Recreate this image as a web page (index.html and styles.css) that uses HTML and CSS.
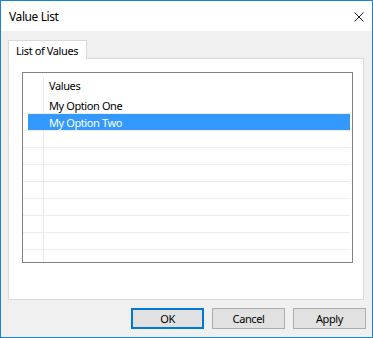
FILE: index.html
```html
<!DOCTYPE html>
<html lang="en">
<head>
    <meta charset="UTF-8">
    <title>Value List</title>
    <link rel="stylesheet" href="styles.css">
</head>
<body>
    <div class="window">
        <div class="title-bar">
            <span class="title">Value List</span>
            <svg class="close" width="10" height="10" viewBox="0 0 10 10">
                <path d="M0.5 0.5 L9.5 9.5 M9.5 0.5 L0.5 9.5" stroke="#1a1a1a" stroke-width="1" fill="none"/>
            </svg>
        </div>

        <div class="content">
            <div class="tabs">
                <div class="tab active">List of Values</div>
            </div>
            <div class="tab-panel">
                <div class="grid">
                    <div class="row header">
                        <div class="row-head"></div>
                        <div class="cell">Values</div>
                    </div>
                    <div class="row">
                        <div class="row-head"></div>
                        <div class="cell">My Option One</div>
                    </div>
                    <div class="row selected">
                        <div class="row-head"></div>
                        <div class="cell">My Option Two</div>
                    </div>
                    <div class="row"><div class="row-head"></div><div class="cell"></div></div>
                    <div class="row"><div class="row-head"></div><div class="cell"></div></div>
                    <div class="row"><div class="row-head"></div><div class="cell"></div></div>
                    <div class="row"><div class="row-head"></div><div class="cell"></div></div>
                    <div class="row"><div class="row-head"></div><div class="cell"></div></div>
                    <div class="row"><div class="row-head"></div><div class="cell"></div></div>
                    <div class="row"><div class="row-head"></div><div class="cell"></div></div>
                    <div class="row"><div class="row-head"></div><div class="cell"></div></div>
                </div>
            </div>

            <div class="buttons">
                <button class="btn default">OK</button>
                <button class="btn">Cancel</button>
                <button class="btn">Apply</button>
            </div>
        </div>
    </div>
</body>
</html>
```

FILE: styles.css
```css
* {
    margin: 0;
    padding: 0;
    box-sizing: border-box;
    font-family: 'Noto Sans', 'Segoe UI', sans-serif;
    letter-spacing: -0.4px;
}

body {
    background-color: #f0f0f0;
    width: 373px;
    height: 338px;
    overflow: hidden;
}

.window {
    width: 373px;
    height: 338px;
    border: 1px solid #1883d7;
    background-color: #f0f0f0;
    display: flex;
    flex-direction: column;
}

.title-bar {
    height: 30px;
    background-color: #fff;
    display: flex;
    align-items: center;
    justify-content: space-between;
    padding: 0 8px 0 8px;
}

.title {
    font-size: 12px;
    color: #000;
}

.close {
    display: block;
    margin-top: 1px;
}

.content {
    flex: 1;
    display: flex;
    flex-direction: column;
    padding: 9px 8px 0 7px;
}

.tabs {
    display: flex;
    height: 18px;
}

.tab {
    width: 79px;
    height: 19px;
    padding: 2px 0 0 7px;
    font-size: 11px;
    line-height: 15px;
    color: #000;
    background-color: #fff;
    border: 1px solid #d9d9d9;
    border-bottom: none;
    position: relative;
    z-index: 1;
}

.tab-panel {
    width: 356px;
    height: 242px;
    background-color: #fff;
    border: 1px solid #d9d9d9;
    padding: 13px 0 0 13px;
}

.grid {
    width: 331px;
    height: 191px;
    border: 1px solid #828282;
    overflow: hidden;
    padding-right: 2px;
}

.row {
    display: flex;
    height: 17px;
    border-bottom: 1px solid #ececec;
    font-size: 11px;
    color: #000;
}

.row.header {
    height: 24px;
    border-bottom: none;
    padding-top: 4px;
}

.row-head {
    width: 21px;
    border-right: 1px solid #e6e6e6;
    flex-shrink: 0;
}

.cell {
    flex: 1;
    padding-left: 5px;
    line-height: 17px;
}

.row.selected .cell {
    background-color: #3399ff;
    color: #fff;
    margin-left: -16px;
    padding-left: 21px;
}

.buttons {
    display: flex;
    justify-content: flex-end;
    gap: 8px;
    margin-top: 8px;
    margin-right: -2px;
}

.btn {
    width: 73px;
    height: 21px;
    border: 1px solid #adadad;
    background-color: #e1e1e1;
    font-size: 11px;
    color: #000;
}

.btn.default {
    border-color: #0078d7;
    box-shadow: inset 0 0 0 1px #0078d7;
}
```
